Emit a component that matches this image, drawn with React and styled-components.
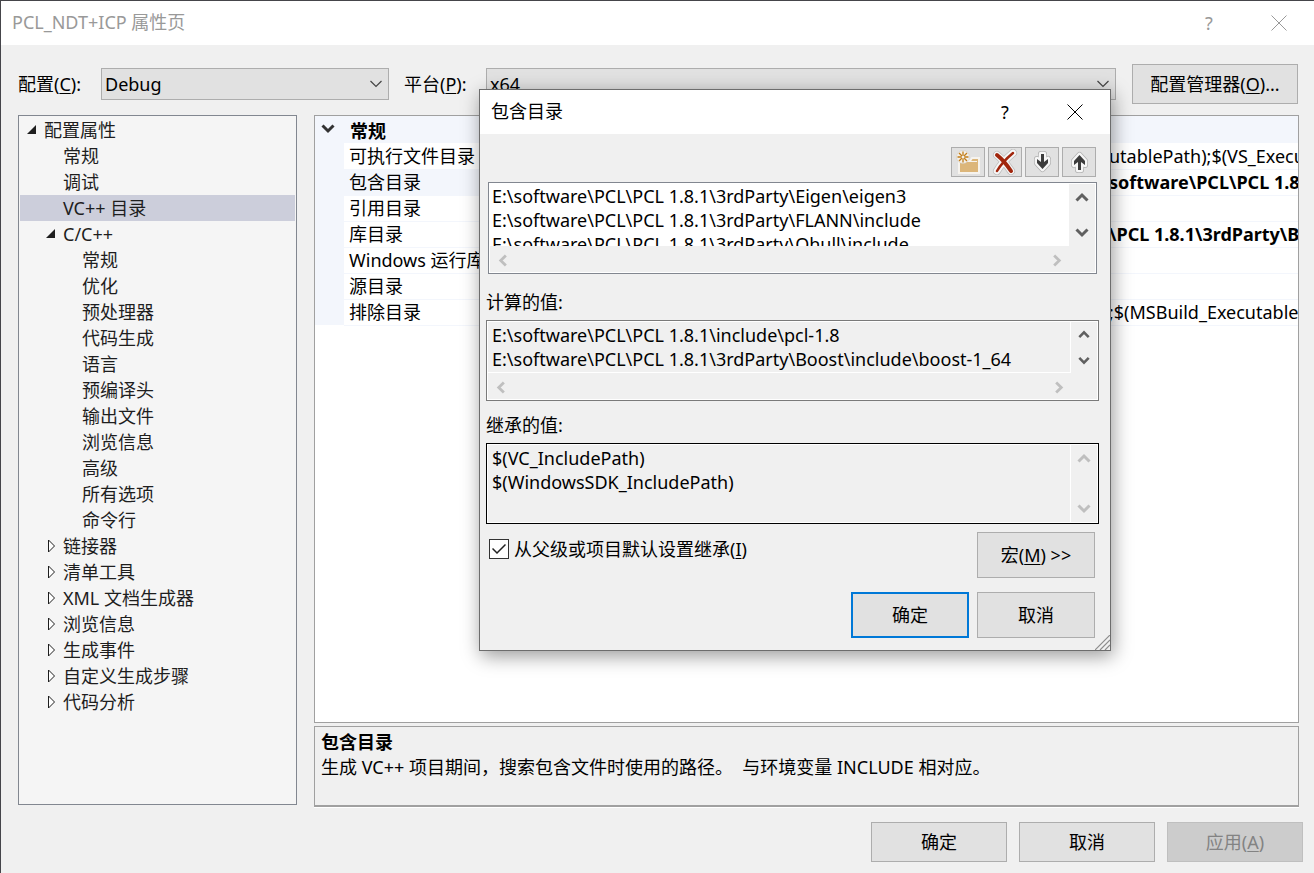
import React from "react";
import styled, { createGlobalStyle, css } from "styled-components";

const GlobalStyle = createGlobalStyle`
  * {
    box-sizing: border-box;
  }
  body {
    margin: 0;
    background: #f0f0f0;
  }
  body, button, select, textarea {
    font-family: "Noto Sans", "Noto Sans CJK SC", sans-serif;
    font-size: 18px;
    line-height: 24px;
    color: #000;
  }
  u {
    text-decoration-thickness: 1px;
    text-underline-offset: 2px;
  }
`;

const Window = styled.div`
  position: relative;
  display: flex;
  flex-direction: column;
  min-height: 100vh;
  border-top: 1px solid #45454a;
  border-left: 1px solid #45454a;
  background: #f0f0f0;
`;

const TitleBar = styled.header`
  display: flex;
  align-items: center;
  height: 44px;
  padding-left: ${(props) => props.$indent || 11}px;
  background: #fff;
  color: ${(props) => (props.$inactive ? "#999" : "#000")};
`;

const Title = styled.h1`
  flex: 1;
  margin: 0;
  padding-bottom: 2px;
  font-size: 18px;
  font-weight: 400;
`;

const CaptionButton = styled.button`
  display: flex;
  align-items: center;
  justify-content: center;
  width: 70px;
  height: 44px;
  padding: 0 0 1px;
  border: 0;
  background: none;
  color: inherit;
`;

const ConfigRow = styled.div`
  display: flex;
  align-items: center;
  height: 40px;
  margin: 19px 16px 11px 17px;
`;

const FieldLabel = styled.label`
  flex: none;
  width: ${(props) => props.$width}px;
`;

const SelectWrap = styled.div`
  position: relative;
  flex: ${(props) => (props.$grow ? "1" : "0 0 288px")};
  margin-right: ${(props) => (props.$grow ? 16 : 15)}px;
`;

const Select = styled.select`
  display: block;
  width: 100%;
  height: 32px;
  padding: 0 3px;
  border: 1px solid #adadad;
  border-radius: 0;
  background: #e1e1e1;
  appearance: none;
`;

const SelectArrow = styled.svg`
  position: absolute;
  right: 7px;
  top: 12px;
  pointer-events: none;
`;

const Button = styled.button`
  flex: none;
  width: ${(props) => props.$width}px;
  height: ${(props) => props.$height || 40}px;
  padding: 0;
  border: ${(props) => (props.$primary ? "2px solid #0078d7" : "1px solid #adadad")};
  background: #e1e1e1;
  &:disabled {
    border-color: #bfbfbf;
    background: #ccc;
    color: #838383;
  }
`;

const Content = styled.main`
  flex: 1;
  display: flex;
  gap: 17px;
  padding: 0 15px 0 17px;
`;

const Tree = styled.ul`
  flex: none;
  width: 279px;
  margin: 0 0 2px;
  padding: 1px;
  border: 1px solid #828790;
  background: #f5f5f5;
  list-style: none;
`;

const TreeItem = styled.li`
  display: flex;
  align-items: center;
  height: 26px;
  padding-left: ${(props) => 6 + props.$level * 19}px;
  color: #1e1e1e;
  background: ${(props) => (props.$selected ? "#cccedb" : "transparent")};
`;

const TreeIcon = styled.svg`
  flex: none;
  width: 12px;
  height: 14px;
  margin-right: 6px;
`;

const RightPane = styled.div`
  flex: 1;
  min-width: 0;
  display: flex;
  flex-direction: column;
  gap: 3px;
`;

const GridBox = styled.div`
  flex: 1;
  border: 1px solid #a0a0a0;
  background: #fff;
  overflow: hidden;
`;

const PropertyTable = styled.table`
  width: 100%;
  table-layout: fixed;
  border-collapse: collapse;
`;

const Gutter = styled.td`
  width: 29px;
  padding: 0 3px 4px 0;
  background: #f3f6fc;
  color: #333;
  text-align: center;
  line-height: 16px;
`;

const GroupCell = styled.th`
  height: 27px;
  padding: 2px 0 0 6px;
  background: #f3f6fc;
  text-align: left;
  font-weight: 700;
`;

const cell = css`
  height: 26px;
  padding: 0;
  border-bottom: 1px solid #f3f6fc;
  overflow: hidden;
  white-space: nowrap;
`;

const NameCell = styled.th`
  ${cell};
  padding-left: 5px;
  text-align: left;
  font-weight: 400;
  background: ${(props) => (props.$selected ? "#f3f6fc" : "#fff")};
`;

const ValueCell = styled.td`
  ${cell};
  width: 189px;
  font-weight: ${(props) => (props.$bold ? 700 : 400)};
`;

const Description = styled.section`
  height: 81px;
  padding: 3px 6px;
  border: 1px solid #a0a0a0;
  border-bottom-width: 2px;
  box-shadow: 0 1px 0 #fff;
  line-height: 25px;
`;

const DescriptionTitle = styled.h2`
  margin: 0;
  font-size: 18px;
  font-weight: 700;
`;

const DescriptionText = styled.p`
  margin: 0;
  white-space: pre-wrap;
`;

const Footer = styled.footer`
  display: flex;
  justify-content: flex-end;
  gap: 12px;
  padding: 15px 11px 11px;
`;

const Dialog = styled.section`
  position: absolute;
  top: 88px;
  left: 478px;
  width: 632px;
  border: 1px solid #6d6d6d;
  background: #f0f0f0;
  box-shadow: 2px 5px 18px rgba(0, 0, 0, 0.4);
`;

const DialogBody = styled.div`
  display: flex;
  flex-direction: column;
  padding: 13px 11px 12px 6px;
`;

const Toolbar = styled.div`
  display: flex;
  justify-content: flex-end;
  gap: 3px;
  padding-right: 3px;
  margin-bottom: 5px;
`;

const ToolButton = styled.button`
  display: flex;
  align-items: center;
  justify-content: center;
  width: 34px;
  height: 30px;
  padding: 0;
  border: 1px solid #adadad;
  background: #e1e1e1;
`;

const ListFrame = styled.div`
  display: grid;
  grid-template-columns: 1fr 26px;
  grid-template-rows: ${(props) => (props.$horizontal ? "1fr 26px" : "1fr")};
  height: ${(props) => (props.$editable ? 92 : 81)}px;
  margin: ${(props) => (props.$editable ? "0 2px" : "0")};
  padding: 1px;
  border: 1px solid ${(props) => props.$border};
  box-shadow: inset 0 0 0 1px #fff;
`;

const ListText = styled.textarea`
  display: block;
  width: 100%;
  height: 100%;
  padding: ${(props) => (props.$editable ? "0 2px" : "1px 4px")};
  border: 0;
  border-right: 1px solid #fff;
  border-bottom: ${(props) => (props.$horizontal && !props.$editable ? "1px solid #fff" : "0")};
  background: ${(props) => (props.$editable ? "#fff" : "#f0f0f0")};
  outline: 0;
  resize: none;
  overflow: hidden;
  white-space: pre;
`;

const Scroll = styled.div`
  display: flex;
  flex-direction: ${(props) => (props.$vertical ? "column" : "row")};
  justify-content: space-between;
  min-height: 0;
`;

const ScrollButton = styled.button`
  display: flex;
  align-items: center;
  justify-content: center;
  width: 26px;
  height: 28px;
  min-height: 0;
  padding: 0;
  border: 0;
  background: none;
  color: ${(props) => (props.$dim ? "#bfbfbf" : "#606060")};
`;

const ListLabel = styled.label`
  margin: ${(props) => (props.$first ? "16px" : "12px")} 0 6px;
`;

const OptionRow = styled.div`
  display: flex;
  justify-content: space-between;
  padding: 8px 4px 14px 3px;
`;

const CheckLabel = styled.label`
  position: relative;
  display: flex;
  align-items: center;
  gap: 5px;
  height: 34px;
`;

const Checkbox = styled.input`
  appearance: none;
  width: 20px;
  height: 20px;
  margin: 0;
  border: 1px solid #333;
  background: #fff;
`;

const CheckMark = styled.svg`
  position: absolute;
  left: 3px;
  top: 10px;
  pointer-events: none;
`;

const DialogActions = styled.div`
  display: flex;
  justify-content: flex-end;
  gap: 8px;
  padding-right: 4px;
`;

const Grip = styled.svg`
  position: absolute;
  right: 0;
  bottom: 0;
`;

const chevrons = {
  up: "M1.5 9.5 7 4l5.5 5.5",
  down: "M1.5 4.5 7 10l5.5-5.5",
  left: "M9.5 1.5 4 7l5.5 5.5",
  right: "M4.5 1.5 10 7l-5.5 5.5",
};

const arrowPath = "M9 3h3v8l4-3v4l-5.500 6L5 12V8l4 3z";

const treeItems = [
  { text: "配置属性", level: 0, state: "open" },
  { text: "常规", level: 1 },
  { text: "调试", level: 1 },
  { text: "VC++ 目录", level: 1, selected: true },
  { text: "C/C++", level: 1, state: "open" },
  { text: "常规", level: 2 },
  { text: "优化", level: 2 },
  { text: "预处理器", level: 2 },
  { text: "代码生成", level: 2 },
  { text: "语言", level: 2 },
  { text: "预编译头", level: 2 },
  { text: "输出文件", level: 2 },
  { text: "浏览信息", level: 2 },
  { text: "高级", level: 2 },
  { text: "所有选项", level: 2 },
  { text: "命令行", level: 2 },
  { text: "链接器", level: 1, state: "closed" },
  { text: "清单工具", level: 1, state: "closed" },
  { text: "XML 文档生成器", level: 1, state: "closed" },
  { text: "浏览信息", level: 1, state: "closed" },
  { text: "生成事件", level: 1, state: "closed" },
  { text: "自定义生成步骤", level: 1, state: "closed" },
  { text: "代码分析", level: 1, state: "closed" },
];

const properties = [
  { name: "可执行文件目录", value: "utablePath);$(VS_ExecutablePath)" },
  { name: "包含目录", value: "software\\PCL\\PCL 1.8.1", bold: true, selected: true },
  { name: "引用目录", value: "" },
  { name: "库目录", value: "\\PCL 1.8.1\\3rdParty\\Boost", bold: true },
  { name: "Windows 运行库目录", value: "" },
  { name: "源目录", value: "" },
  { name: "排除目录", value: ";$(MSBuild_ExecutablePath)" },
];

const includePaths = `E:\\software\\PCL\\PCL 1.8.1\\3rdParty\\Eigen\\eigen3
E:\\software\\PCL\\PCL 1.8.1\\3rdParty\\FLANN\\include
E:\\software\\PCL\\PCL 1.8.1\\3rdParty\\Qhull\\include`;

const computedPaths = `E:\\software\\PCL\\PCL 1.8.1\\include\\pcl-1.8
E:\\software\\PCL\\PCL 1.8.1\\3rdParty\\Boost\\include\\boost-1_64`;

const inheritedPaths = `$(VC_IncludePath)
$(WindowsSDK_IncludePath)`;

function Chevron({ direction, size = 14, width = 3 }) {
  return (
    <svg width={size} height={size} viewBox="0 0 14 14" fill="none" stroke="currentColor" strokeWidth={width}>
      <path d={chevrons[direction]} />
    </svg>
  );
}

function CloseIcon() {
  return (
    <svg width="16" height="16" viewBox="0 0 16 16" stroke="currentColor">
      <path d="M.5.5l15 15M15.5.5l-15 15" />
    </svg>
  );
}

function Expander({ state }) {
  return (
    <TreeIcon viewBox="0 0 12 14">
      {state === "open" && <path d="M10 2v9H1z" fill="#1e1e1e" />}
      {state === "closed" && <path d="M3.5 1v12l6-6z" fill="#fff" stroke="#1e1e1e" />}
    </TreeIcon>
  );
}

function ComboBox({ id, value, grow }) {
  return (
    <SelectWrap $grow={grow}>
      <Select id={id} defaultValue={value}>
        <option>{value}</option>
      </Select>
      <SelectArrow width="12" height="8" viewBox="0 0 12 8" fill="none" stroke="#444">
        <path d="M.5 1 6 6.500 11.500 1" strokeWidth="1.200" />
      </SelectArrow>
    </SelectWrap>
  );
}

function NewFolderIcon() {
  return (
    <svg width="26" height="26" viewBox="0 0 26 26">
      <path d="M4 12h11l2-3h7v15H4z" fill="#dcb67a" stroke="#f6f3ee" strokeWidth="2" />
      <path d="M15 12.500h7" stroke="#f6f3ee" />
      <circle cx="8" cy="8" r="6.500" fill="#f3efe8" stroke="#cfc8bd" strokeWidth=".5" />
      <path d="M8 2.500v11M2.500 8h11M4 4l8 8M12 4l-8 8" stroke="#c27d1a" strokeWidth="1.300" />
      <circle cx="8" cy="8" r="1.500" fill="#f3efe8" />
    </svg>
  );
}

function DeleteIcon() {
  const cross = "M4 4c5 4 10 10 14 16M20 2C14 7 8 13 4 20";
  return (
    <svg width="28" height="26" viewBox="-2 -2 28 26" fill="none" strokeLinecap="round">
      <path d={cross} stroke="#bdbdbd" strokeWidth="8" />
      <path d={cross} stroke="#f6f6f6" strokeWidth="6.500" />
      <path d="M4 4c5 4 10 10 14 16" stroke="#a1260d" strokeWidth="4" />
      <path d="M20 2C14 7 8 13 4 20" stroke="#a1260d" strokeWidth="2.500" />
    </svg>
  );
}

function MoveIcon({ up }) {
  return (
    <svg width="21" height="22" viewBox="0 0 21 22">
      <g transform={up ? "rotate(180 10.5 11)" : undefined} strokeLinejoin="round">
        <path d={arrowPath} stroke="#b0b0b0" strokeWidth="6" />
        <path d={arrowPath} fill="#f6f6f6" stroke="#f6f6f6" strokeWidth="4.500" />
        <path d={arrowPath} fill="#3c3c3c" />
      </g>
    </svg>
  );
}

function PathList({ id, value, editable, horizontal, border, dim, arrow = 12 }) {
  return (
    <ListFrame $editable={editable} $horizontal={horizontal} $border={border}>
      <ListText
        id={id}
        aria-label={editable ? "包含目录" : undefined}
        defaultValue={value}
        readOnly={!editable}
        spellCheck={false}
        $editable={editable}
        $horizontal={horizontal}
      />
      <Scroll $vertical>
        <ScrollButton type="button" $dim={dim} aria-label="向上滚动">
          <Chevron direction="up" size={arrow} />
        </ScrollButton>
        <ScrollButton type="button" $dim={dim} aria-label="向下滚动">
          <Chevron direction="down" size={arrow} />
        </ScrollButton>
      </Scroll>
      {horizontal && (
        <Scroll>
          <ScrollButton type="button" $dim aria-label="向左滚动">
            <Chevron direction="left" size={13} />
          </ScrollButton>
          <ScrollButton type="button" $dim aria-label="向右滚动">
            <Chevron direction="right" size={13} />
          </ScrollButton>
        </Scroll>
      )}
    </ListFrame>
  );
}

function IncludeDialog() {
  return (
    <Dialog role="dialog" aria-label="包含目录">
      <TitleBar $indent={11}>
        <Title as="h2">包含目录</Title>
        <CaptionButton type="button">?</CaptionButton>
        <CaptionButton type="button" aria-label="关闭">
          <CloseIcon />
        </CaptionButton>
      </TitleBar>
      <DialogBody>
        <Toolbar>
          <ToolButton type="button" aria-label="新行">
            <NewFolderIcon />
          </ToolButton>
          <ToolButton type="button" aria-label="删除">
            <DeleteIcon />
          </ToolButton>
          <ToolButton type="button" aria-label="下移">
            <MoveIcon />
          </ToolButton>
          <ToolButton type="button" aria-label="上移">
            <MoveIcon up />
          </ToolButton>
        </Toolbar>
        <PathList id="include" value={includePaths} border="#828790" editable horizontal arrow={14} />
        <ListLabel htmlFor="computed" $first>
          计算的值:
        </ListLabel>
        <PathList id="computed" value={computedPaths} border="#7a7a7a" horizontal />
        <ListLabel htmlFor="inherited">继承的值:</ListLabel>
        <PathList id="inherited" value={inheritedPaths} border="#000" dim arrow={14} />
        <OptionRow>
          <CheckLabel>
            <Checkbox type="checkbox" defaultChecked />
            <CheckMark width="14" height="14" viewBox="0 0 14 14" fill="none" stroke="#222" strokeWidth="1.500">
              <path d="M.5 6.500 5 11l8.500-8.500" />
            </CheckMark>
            <span>
              从父级或项目默认设置继承(<u>I</u>)
            </span>
          </CheckLabel>
          <Button type="button" $width={118} $height={46}>
            宏(<u>M</u>) &gt;&gt;
          </Button>
        </OptionRow>
        <DialogActions>
          <Button type="button" $width={118} $height={46} $primary>
            确定
          </Button>
          <Button type="button" $width={118} $height={46}>
            取消
          </Button>
        </DialogActions>
      </DialogBody>
      <Grip width="15" height="15" viewBox="0 0 15 15" stroke="#8c8c8c" strokeWidth="1.200">
        <path d="M0 15 15 0M5 15 15 5M10 15l5-5" />
      </Grip>
    </Dialog>
  );
}

function App() {
  return (
    <>
      <GlobalStyle />
      <Window>
        <TitleBar $inactive>
          <Title>PCL_NDT+ICP 属性页</Title>
          <CaptionButton type="button">?</CaptionButton>
          <CaptionButton type="button" aria-label="关闭">
            <CloseIcon />
          </CaptionButton>
        </TitleBar>
        <ConfigRow>
          <FieldLabel htmlFor="config" $width={83}>
            配置(<u>C</u>):
          </FieldLabel>
          <ComboBox id="config" value="Debug" />
          <FieldLabel htmlFor="platform" $width={82}>
            平台(<u>P</u>):
          </FieldLabel>
          <ComboBox id="platform" value="x64" grow />
          <Button type="button" $width={166}>
            配置管理器(<u>O</u>)...
          </Button>
        </ConfigRow>
        <Content>
          <Tree>
            {treeItems.map((item, index) => (
              <TreeItem key={index} $level={item.level} $selected={item.selected}>
                <Expander state={item.state} />
                {item.text}
              </TreeItem>
            ))}
          </Tree>
          <RightPane>
            <GridBox>
              <PropertyTable>
                <tbody>
                  <tr>
                    <Gutter>
                      <Chevron direction="down" />
                    </Gutter>
                    <GroupCell>常规</GroupCell>
                    <GroupCell as="td" />
                  </tr>
                  {properties.map((property) => (
                    <tr key={property.name}>
                      <Gutter />
                      <NameCell scope="row" $selected={property.selected}>
                        {property.name}
                      </NameCell>
                      <ValueCell $bold={property.bold}>{property.value}</ValueCell>
                    </tr>
                  ))}
                </tbody>
                <colgroup>
                  <col />
                  <col />
                  <col style={{ width: 189 }} />
                </colgroup>
              </PropertyTable>
            </GridBox>
            <Description>
              <DescriptionTitle>包含目录</DescriptionTitle>
              <DescriptionText>
                生成 VC++ 项目期间，搜索包含文件时使用的路径。{"  "}与环境变量 INCLUDE 相对应。
              </DescriptionText>
            </Description>
          </RightPane>
        </Content>
        <Footer>
          <Button type="button" $width={136}>
            确定
          </Button>
          <Button type="button" $width={136}>
            取消
          </Button>
          <Button type="button" $width={136} disabled>
            应用(<u>A</u>)
          </Button>
        </Footer>
        <IncludeDialog />
      </Window>
    </>
  );
}

export default App;
